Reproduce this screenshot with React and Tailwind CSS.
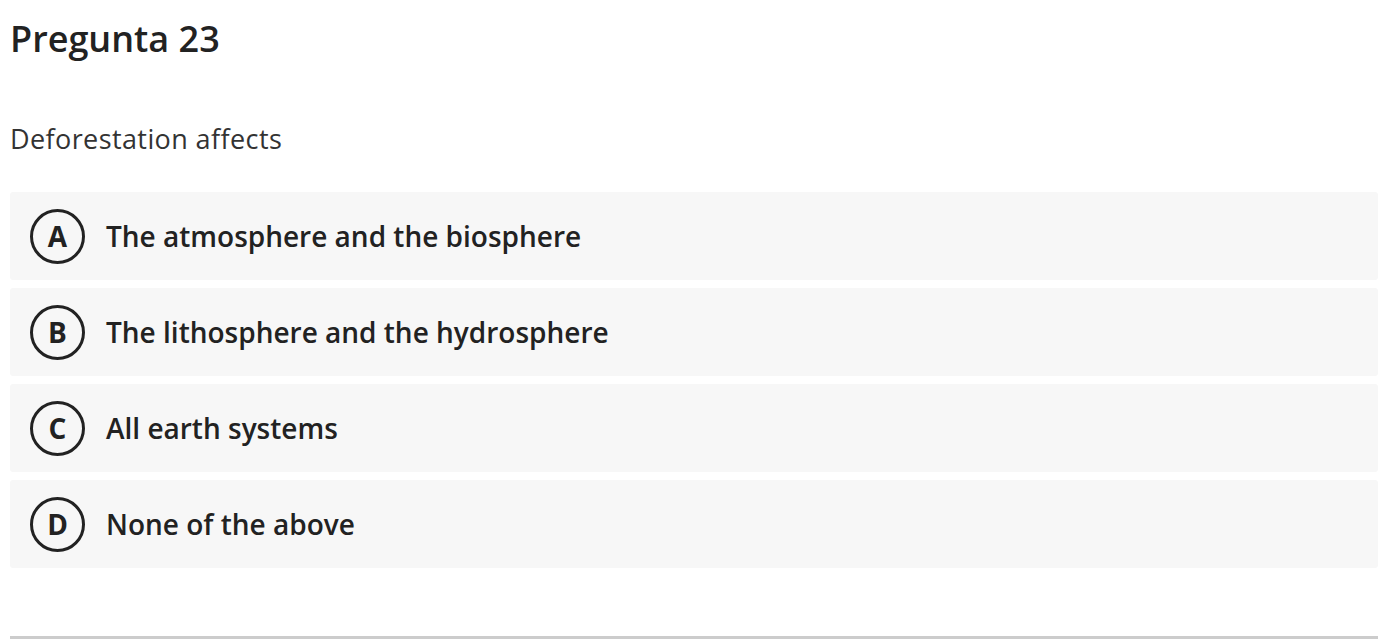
export default function App() {
  const options = [
    ["A", "The atmosphere and the biosphere"],
    ["B", "The lithosphere and the hydrosphere"],
    ["C", "All earth systems"],
    ["D", "None of the above"],
  ];
  return (
    <div
      className="w-[1378px] h-[640px] bg-white overflow-hidden pl-[10px] text-[#222]"
      style={{ fontFamily: '"Open Sans", "Noto Sans", sans-serif' }}
    >
      <h1 className="text-[36px] font-semibold leading-none pt-[21px] text-[#222]">Pregunta 23</h1>
      <p className="text-[27px] tracking-[0.4px] leading-none mt-[68px] text-[#333]">Deforestation affects</p>
      <div className="mt-[40px] flex flex-col gap-[8px]">
        {options.map(([l, t]) => (
          <div key={l} className="h-[88px] bg-[#f7f7f7] rounded-[3px] flex items-center pl-[20px]">
            <div className="w-[55px] h-[55px] rounded-full border-[3px] border-[#222] flex items-center justify-center text-[28px] font-bold text-[#222] leading-none">
              {l}
            </div>
            <span className="ml-[21px] text-[28px] font-semibold text-[#222]">{t}</span>
          </div>
        ))}
      </div>
      <div className="mt-[68px] h-[3px] bg-[#cccccc]" />
    </div>
  );
}
